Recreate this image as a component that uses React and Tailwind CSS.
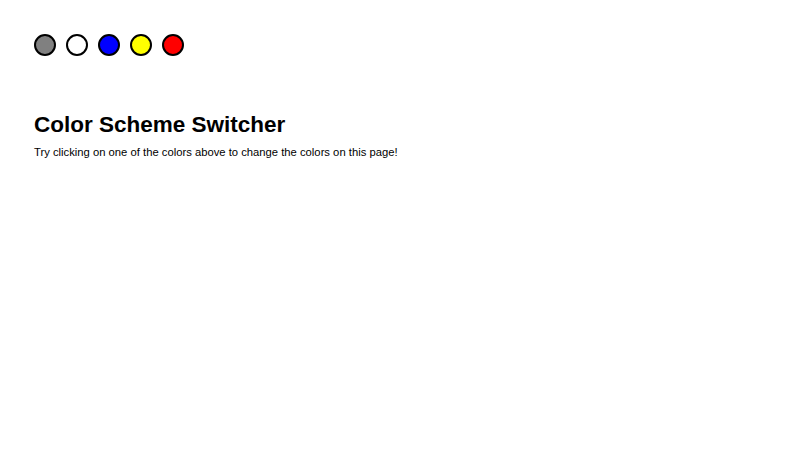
import React, { useState } from "react";

const colors = [
  { name: "gray", bg: "bg-[#808080]" },
  { name: "white", bg: "bg-white" },
  { name: "blue", bg: "bg-[#0000ff]" },
  { name: "yellow", bg: "bg-[#ffff00]" },
  { name: "red", bg: "bg-[#ff0000]" },
];

export default function App() {
  const [scheme, setScheme] = useState("white");
  return (
    <div className="min-h-[450px] w-full bg-white text-black px-[34px] pt-[34px] font-['Liberation_Sans',Arial,sans-serif]">
      <div className="flex gap-[10px]">
        {colors.map((c) => (
          <button
            key={c.name}
            onClick={() => setScheme(c.name)}
            className={`w-[22px] h-[22px] rounded-full border-2 border-black ${c.bg}`}
            aria-label={c.name}
          />
        ))}
      </div>
      <h1 className="mt-[56px] text-[22.5px] leading-[26px] font-bold">Color Scheme Switcher</h1>
      <p className="mt-[7px] text-[11.25px] leading-[14px]">Try clicking on one of the colors above to change the colors on this page!</p>
    </div>
  );
}
